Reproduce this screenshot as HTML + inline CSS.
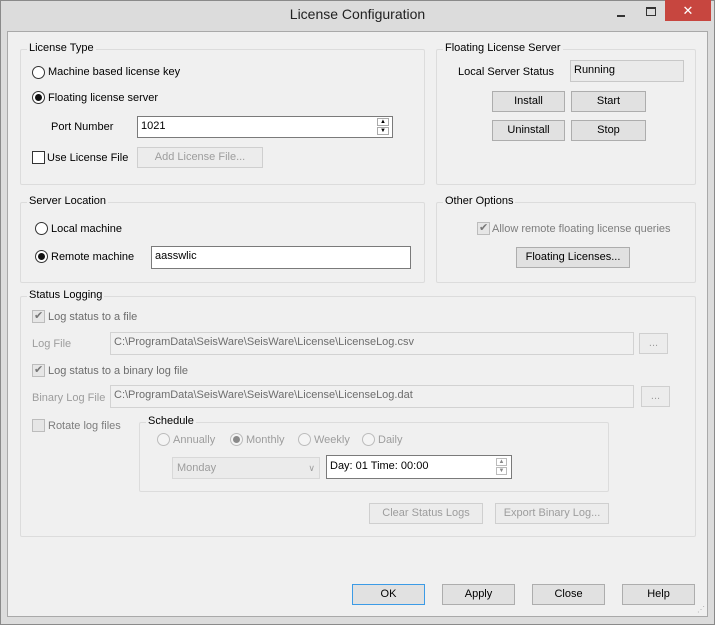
<!DOCTYPE html>
<html><head><style>
*{box-sizing:border-box;margin:0;padding:0}
body{width:715px;height:625px;background:#d9d9d9;font-family:"Liberation Sans",sans-serif;font-size:11px;color:#000;position:relative;overflow:hidden}
.a{position:absolute;white-space:nowrap}
.win{position:absolute;left:0;top:0;width:715px;height:625px;border:1px solid #8a8a8a;background:#dcdcdc}
.cl{position:absolute;left:7px;top:31px;width:701px;height:586px;background:#f0f0f0;border:1px solid #a9a9a9}
.gb{position:absolute;border:1px solid #dcdcdc;border-radius:2px}
.gl{position:absolute;background:#f0f0f0;padding:0 2px;top:-8px;left:6px;white-space:nowrap}
.btn{position:absolute;border:1px solid #adadad;background:#e1e1e1;text-align:center;line-height:19px}
.dis{color:#9d9d9d}
.btn.dis{border-color:#cfcfcf;background:#ececec;color:#9d9d9d}
.ed{position:absolute;border:1px solid #7a7a7a;background:#fff;padding-left:3px;line-height:19px}
.ed.dis{border-color:#d2d2d2;background:#f0f0f0;color:#6d6d6d}
.rd{position:absolute;width:13px;height:13px;border:1px solid #333;border-radius:50%;background:#fff}
.rd.on::after{content:"";position:absolute;left:2px;top:2px;width:7px;height:7px;border-radius:50%;background:#111}
.rd.dis{border-color:#bcbcbc;background:#f4f4f4}
.rd.dis.on::after{background:#8a8a8a}
.cb{position:absolute;width:13px;height:13px;border:1px solid #333;background:#fff}
.cb.dis{border-color:#bcbcbc;background:#e6e6e6}
.cb.ck::after{content:"✔";position:absolute;left:1px;top:-2px;font-size:11px;color:#777}
</style></head><body>
<div class="win"></div>
<div class="a" style="left:0;top:6px;width:715px;text-align:center;font-size:14px;color:#222">License Configuration</div>
<div class="a" style="left:617px;top:15px;width:8px;height:2px;background:#333"></div>
<div class="a" style="left:646px;top:7px;width:10px;height:9px;border:1px solid #333;border-top-width:2px"></div>
<div class="a" style="left:665px;top:0;width:46px;height:21px;background:#c7463f;color:#fff;text-align:center;font-size:13px;line-height:21px">✕</div>
<div class="cl"></div>

<div class="gb" style="left:20px;top:49px;width:405px;height:136px"><span class="gl">License Type</span></div>
<div class="rd" style="left:32px;top:66px"></div><span class="a" style="left:48px;top:66px">Machine based license key</span>
<div class="rd on" style="left:32px;top:91px"></div><span class="a" style="left:48px;top:92px">Floating license server</span>
<span class="a" style="left:51px;top:121px">Port Number</span>
<div class="ed" style="left:137px;top:116px;width:256px;height:22px">1021</div>
<div class="a" style="left:377px;top:118px;width:12px;height:8px;border:1px solid #aaa;font-size:6px;text-align:center;line-height:7px">▲</div>
<div class="a" style="left:377px;top:127px;width:12px;height:8px;border:1px solid #aaa;font-size:6px;text-align:center;line-height:7px">▼</div>
<div class="cb" style="left:32px;top:151px"></div><span class="a" style="left:47px;top:152px">Use License File</span>
<div class="btn dis" style="left:137px;top:147px;width:126px;height:21px">Add License File...</div>

<div class="gb" style="left:436px;top:49px;width:260px;height:136px"><span class="gl">Floating License Server</span></div>
<span class="a" style="left:458px;top:66px">Local Server Status</span>
<div class="a" style="left:570px;top:60px;width:114px;height:22px;border:1px solid #c8c8c8;background:#eaeaea;padding-left:3px;line-height:19px">Running</div>
<div class="btn" style="left:492px;top:91px;width:73px;height:21px">Install</div>
<div class="btn" style="left:571px;top:91px;width:75px;height:21px">Start</div>
<div class="btn" style="left:492px;top:120px;width:73px;height:21px">Uninstall</div>
<div class="btn" style="left:571px;top:120px;width:75px;height:21px">Stop</div>

<div class="gb" style="left:20px;top:202px;width:405px;height:81px"><span class="gl">Server Location</span></div>
<div class="rd" style="left:35px;top:222px"></div><span class="a" style="left:51px;top:223px">Local machine</span>
<div class="rd on" style="left:35px;top:250px"></div><span class="a" style="left:51px;top:251px">Remote machine</span>
<div class="ed" style="left:151px;top:246px;width:260px;height:23px">aasswlic</div>

<div class="gb" style="left:436px;top:202px;width:260px;height:81px"><span class="gl">Other Options</span></div>
<div class="cb dis ck" style="left:477px;top:222px"></div><span class="a dis" style="left:492px;top:223px;color:#7d7d7d">Allow remote floating license queries</span>
<div class="btn" style="left:516px;top:247px;width:114px;height:21px">Floating Licenses...</div>

<div class="gb" style="left:20px;top:296px;width:676px;height:241px"><span class="gl">Status Logging</span></div>
<div class="cb dis ck" style="left:32px;top:310px"></div><span class="a dis" style="left:48px;top:311px;color:#6d6d6d">Log status to a file</span>
<span class="a dis" style="left:32px;top:338px">Log File</span>
<div class="ed dis" style="left:110px;top:332px;width:524px;height:23px">C:\ProgramData\SeisWare\SeisWare\License\LicenseLog.csv</div>
<div class="btn dis" style="left:639px;top:333px;width:29px;height:21px">...</div>
<div class="cb dis ck" style="left:32px;top:364px"></div><span class="a dis" style="left:48px;top:365px;color:#6d6d6d">Log status to a binary log file</span>
<span class="a dis" style="left:32px;top:392px">Binary Log File</span>
<div class="ed dis" style="left:110px;top:385px;width:524px;height:23px">C:\ProgramData\SeisWare\SeisWare\License\LicenseLog.dat</div>
<div class="btn dis" style="left:641px;top:386px;width:29px;height:21px">...</div>
<div class="cb dis" style="left:32px;top:419px"></div><span class="a dis" style="left:48px;top:420px;color:#7d7d7d">Rotate log files</span>

<div class="gb" style="left:139px;top:422px;width:470px;height:70px"><span class="gl" style="color:#000;left:6px">Schedule</span></div>
<div class="rd dis" style="left:157px;top:433px"></div><span class="a dis" style="left:173px;top:434px">Annually</span>
<div class="rd dis on" style="left:230px;top:433px"></div><span class="a dis" style="left:246px;top:434px">Monthly</span>
<div class="rd dis" style="left:298px;top:433px"></div><span class="a dis" style="left:314px;top:434px">Weekly</span>
<div class="rd dis" style="left:362px;top:433px"></div><span class="a dis" style="left:378px;top:434px">Daily</span>
<div class="a dis" style="left:172px;top:457px;width:148px;height:22px;border:1px solid #d8d8d8;background:#ebebeb;padding-left:4px;line-height:20px">Monday<span style="position:absolute;right:4px;font-size:9px">∨</span></div>
<div class="ed" style="left:326px;top:455px;width:186px;height:24px;line-height:21px">Day: 01 Time: 00:00</div>
<div class="a" style="left:496px;top:458px;width:11px;height:8px;border:1px solid #bbb;font-size:6px;text-align:center;line-height:7px;color:#888">▲</div>
<div class="a" style="left:496px;top:467px;width:11px;height:8px;border:1px solid #bbb;font-size:6px;text-align:center;line-height:7px;color:#888">▼</div>
<div class="btn dis" style="left:369px;top:503px;width:114px;height:21px">Clear Status Logs</div>
<div class="btn dis" style="left:495px;top:503px;width:114px;height:21px">Export Binary Log...</div>

<div class="btn" style="left:352px;top:584px;width:73px;height:21px;border-color:#3c9be6">OK</div>
<div class="btn" style="left:442px;top:584px;width:73px;height:21px">Apply</div>
<div class="btn" style="left:532px;top:584px;width:73px;height:21px">Close</div>
<div class="btn" style="left:622px;top:584px;width:73px;height:21px">Help</div>
<div class="a" style="left:697px;top:605px;font-size:8px;color:#aaa">⋰</div>
</body></html>
